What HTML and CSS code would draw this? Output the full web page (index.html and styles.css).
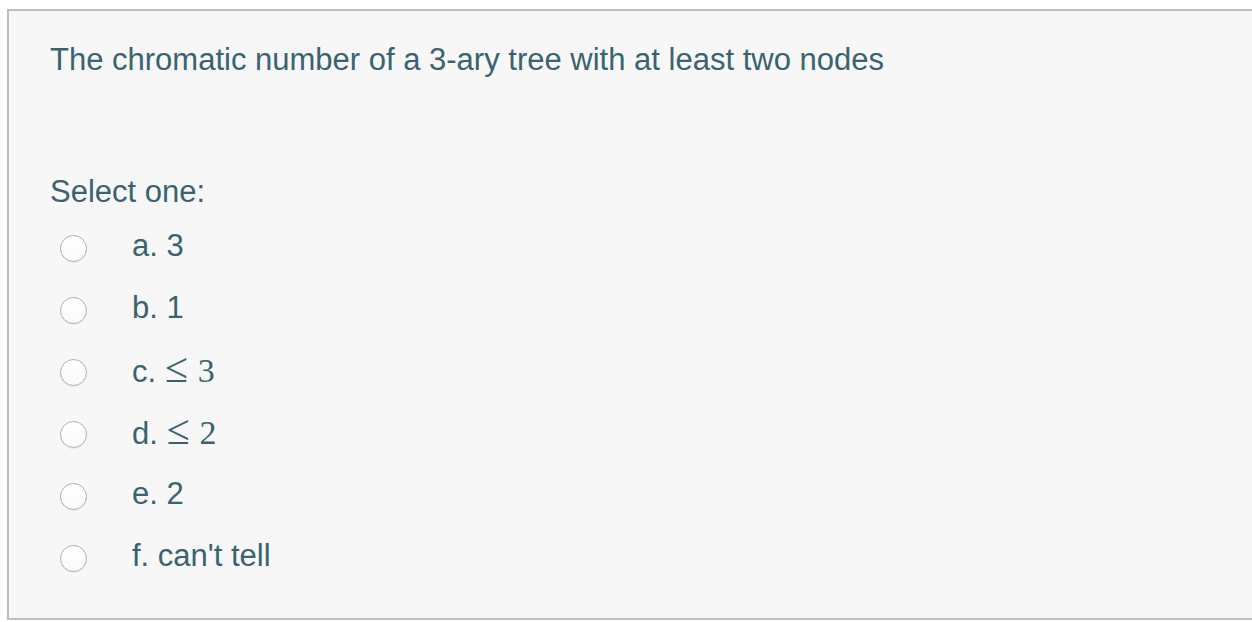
FILE: index.html
```html
<!DOCTYPE html>
<html>
<head>
<meta charset="utf-8">
<link rel="stylesheet" href="styles.css">
</head>
<body>
<div class="que">
  <p class="qtext">The chromatic number of a 3-ary tree with at least two nodes</p>
  <p class="prompt">Select one:</p>
  <div class="answers">
    <div class="row"><span class="radio"></span><span class="label">a. 3</span></div>
    <div class="row"><span class="radio"></span><span class="label">b. 1</span></div>
    <div class="row"><span class="radio"></span><span class="label">c. <span class="math"><span class="rel">≤</span>3</span></span></div>
    <div class="row"><span class="radio"></span><span class="label">d. <span class="math"><span class="rel">≤</span>2</span></span></div>
    <div class="row"><span class="radio"></span><span class="label">e. 2</span></div>
    <div class="row"><span class="radio"></span><span class="label">f. can't tell</span></div>
  </div>
</div>
</body>
</html>
```
FILE: styles.css
```css
html, body {
  margin: 0;
  padding: 0;
  background: #ffffff;
}
body {
  font-family: "Liberation Sans", Arial, sans-serif;
  font-size: 31px;
  color: #3a6370;
  overflow: hidden;
}
.que {
  margin: 9px 0 0 7px;
  width: 1300px;
  box-sizing: border-box;
  background: #f7f7f7;
  border: 2px solid #bdbdbd;
  border-right: none;
  padding: 26px 0 31px 41px;
}
.qtext {
  margin: 0;
  line-height: 45px;
}
.prompt {
  margin: 87px 0 0 0;
  line-height: 45px;
}
.answers {
  margin-top: 1px;
  display: flex;
  flex-direction: column;
}
.row {
  display: flex;
  align-items: center;
  height: 62px;
  line-height: 62px;
}
.radio {
  width: 25px;
  height: 25px;
  border-radius: 50%;
  border: 1px solid #b0b0b0;
  background: linear-gradient(#ffffff, #fafafa);
  box-shadow: 0 1px 1px rgba(0,0,0,0.06);
  margin: 0 45px 0 10px;
  position: relative;
  top: 2px;
  flex: none;
}
.label {
  white-space: nowrap;
}
.math {
  font-family: "Liberation Serif", "Times New Roman", serif;
  font-size: 34px;
}
.rel {
  font-size: 42px;
  margin: 0 10px 0 0;
}
```
